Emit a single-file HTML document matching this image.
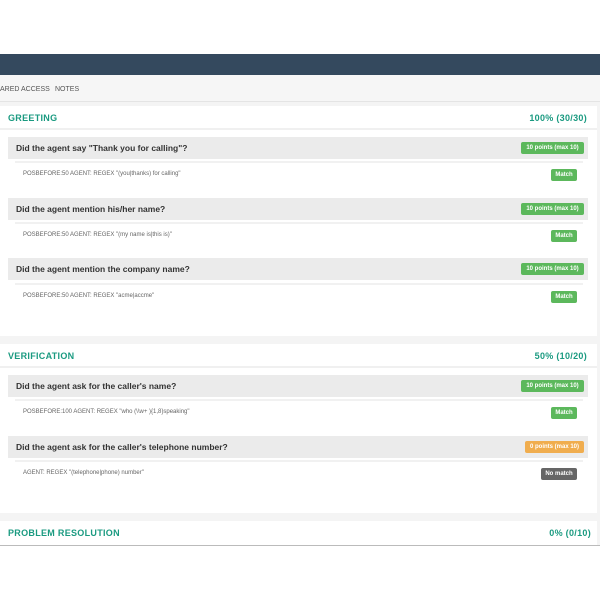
<!DOCTYPE html>
<html><head><style>
*{margin:0;padding:0;box-sizing:border-box}
body{width:600px;height:600px;background:#fff;font-family:"Liberation Sans",sans-serif;position:relative;overflow:hidden}
.a{position:absolute}
.nav{left:0;top:54px;width:600px;height:21px;background:#34495e}
.tabs{left:0;top:75px;width:600px;height:27px;background:#f6f6f6;border-bottom:1px solid #e4e4e4;font-size:7px;color:#555}
.bg{left:0;top:102px;width:600px;height:443px;background:#f4f4f4}
.line{left:0;top:545px;width:600px;height:1px;background:#bbb}
.sec{left:0;width:597px;background:#fff}
.sh{left:0;width:597px;height:24px;border-bottom:2px solid #f0f0f0;font-size:9px;font-weight:bold;color:#1a9a80;letter-spacing:.3px}
.sh span{position:absolute;top:7px}
.q{left:8px;width:580px;height:22px;background:#ebebeb;font-size:8.5px;font-weight:bold;color:#333}
.q span{position:absolute;left:8px;top:6px}
.pts{position:absolute;right:4px;top:5px;height:12px;width:63px;border-radius:2px;background:#5cb85c;color:#fff;font-size:6px;font-weight:bold;text-align:center;line-height:12px}
.s{left:15px;width:568px;border-top:2px solid #f1f1f1;height:24px;font-size:6px;color:#666}
.s span{position:absolute;left:8px;top:8px}
.m{position:absolute;right:6px;top:6px;width:26px;height:12px;border-radius:2px;background:#5cb85c;color:#fff;font-size:6px;font-weight:bold;text-align:center;line-height:12px}
</style></head><body>
<div class="a nav"></div>
<div class="a tabs"><span class="a" style="left:0;top:11px">ARED ACCESS</span><span class="a" style="left:55px;top:11px">NOTES</span></div>
<div class="a bg"></div>
<div class="a line"></div>

<div class="a sec" style="top:106px;height:230px"></div>
<div class="a sh" style="top:106px"><span style="left:8px">GREETING</span><span style="right:10px">100% (30/30)</span></div>
<div class="a q" style="top:137px"><span>Did the agent say "Thank you for calling"?</span><div class="pts">10 points (max 10)</div></div>
<div class="a s" style="top:161px"><span>POSBEFORE:50 AGENT: REGEX "(you|thanks) for calling"</span><div class="m">Match</div></div>
<div class="a q" style="top:198px"><span>Did the agent mention his/her name?</span><div class="pts">10 points (max 10)</div></div>
<div class="a s" style="top:222px"><span>POSBEFORE:50 AGENT: REGEX "(my name is|this is)"</span><div class="m">Match</div></div>
<div class="a q" style="top:258px"><span>Did the agent mention the company name?</span><div class="pts">10 points (max 10)</div></div>
<div class="a s" style="top:283px"><span>POSBEFORE:50 AGENT: REGEX "acme|accme"</span><div class="m">Match</div></div>

<div class="a sec" style="top:344px;height:169px"></div>
<div class="a sh" style="top:344px"><span style="left:8px">VERIFICATION</span><span style="right:10px">50% (10/20)</span></div>
<div class="a q" style="top:375px"><span>Did the agent ask for the caller's name?</span><div class="pts">10 points (max 10)</div></div>
<div class="a s" style="top:399px"><span>POSBEFORE:100 AGENT: REGEX "who (\\w+ ){1,8}speaking"</span><div class="m">Match</div></div>
<div class="a q" style="top:436px"><span>Did the agent ask for the caller's telephone number?</span><div class="pts" style="background:#f0ad4e;width:59px">0 points (max 10)</div></div>
<div class="a s" style="top:460px"><span>AGENT: REGEX "(telephone|phone) number"</span><div class="m" style="background:#666;width:36px">No match</div></div>

<div class="a sec" style="top:521px;height:24px"></div>
<div class="a sh" style="top:521px;border:none"><span style="left:8px">PROBLEM RESOLUTION</span><span style="right:6px">0% (0/10)</span></div>
</body></html>
